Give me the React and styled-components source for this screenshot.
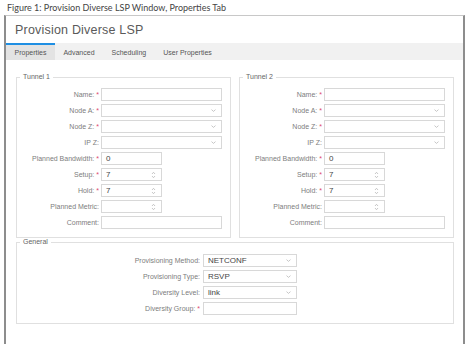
import React from 'react';
import styled, { createGlobalStyle } from 'styled-components';

const Global = createGlobalStyle`
  html, body { margin: 0; padding: 0; background: #fff; overflow: hidden; }
  body { width: 474px; height: 344px; }
`;

const Page = styled.div`
  padding-left: 4px;
  font-family: "Liberation Sans", Arial, sans-serif;
`;

const Caption = styled.div`
  font-family: Lato, "Liberation Sans", sans-serif;
  font-size: 9px;
  line-height: 15px;
  height: 15px;
  color: #444;
  padding-left: 3px;
  white-space: nowrap;
`;

const Window = styled.div`
  width: 461px;
  height: 340px;
  box-sizing: border-box;
  border: 2px solid #8d8d8d;
  border-top: 1px solid #c8c8c8;
  background: #fff;
`;

const Title = styled.div`
  height: 27px;
  display: flex;
  align-items: center;
  padding-left: 9px;
  font-size: 12.5px;
  letter-spacing: 0.2px;
  color: #5a5a5a;
`;

const TabBar = styled.div`
  height: 17px;
  display: flex;
  background: #f1f1f1;
`;

const Tab = styled.div`
  box-sizing: border-box;
  height: 17px;
  padding: 0 8.5px;
  display: flex;
  align-items: center;
  font-size: 7px;
  color: #555;
  border-top: 2px solid ${p => (p.$active ? '#1f8fe3' : 'transparent')};
  background: ${p => (p.$active ? '#e3e3e3' : 'transparent')};
`;

const Content = styled.div`
  padding: 13px 9px 0 10px;
`;

const TunnelRow = styled.div`
  display: flex;
  gap: 8px;
`;

const Group = styled.fieldset`
  flex: 1;
  margin: 0;
  padding: 7px 0 8px 0;
  border: 1px solid #e0e0e0;
  min-width: 0;
`;

const GeneralGroup = styled(Group)`
  margin-top: 0;
  padding-top: 8px;
`;

const Legend = styled.legend`
  margin-left: 3px;
  padding: 0 3px;
  font-size: 7px;
  line-height: 8px;
  color: #666;
`;

const Form = styled.div`
  display: grid;
  grid-template-columns: ${p => p.$label}px auto;
  column-gap: ${p => p.$gap}px;
  row-gap: 3px;
  justify-content: start;
`;

const Label = styled.div`
  height: 13px;
  display: flex;
  align-items: center;
  justify-content: flex-end;
  font-size: 7px;
  color: #7d7d7d;
  white-space: nowrap;
`;

const Req = styled.span`
  color: #dc4a70;
  margin-left: 2px;
`;

const Input = styled.div`
  box-sizing: border-box;
  width: ${p => p.$w}px;
  height: 13px;
  border: 1px solid #d8d8d8;
  background: #fff;
  display: flex;
  align-items: center;
  justify-content: space-between;
  padding: 0 5px 0 4px;
  font-size: 8px;
  color: #444;
`;

const Chevron = () => (
  <svg width="5" height="3" viewBox="0 0 5 3">
    <polyline points="0.5,0.6 2.5,2.4 4.5,0.6" fill="none" stroke="#b0b0b0" strokeWidth="0.7" />
  </svg>
);

const Spinner = () => (
  <svg width="5" height="8" viewBox="0 0 5 8">
    <polyline points="1,3 2.5,1.3 4,3" fill="none" stroke="#b0b0b0" strokeWidth="0.7" />
    <polyline points="1,5 2.5,6.7 4,5" fill="none" stroke="#b0b0b0" strokeWidth="0.7" />
  </svg>
);

const tunnelFields = [
  { label: 'Name:', req: true, kind: 'text', w: 121 },
  { label: 'Node A:', req: true, kind: 'select', w: 121 },
  { label: 'Node Z:', req: true, kind: 'select', w: 121 },
  { label: 'IP Z:', req: false, kind: 'select', w: 121 },
  { label: 'Planned Bandwidth:', req: true, kind: 'text', w: 61, value: '0' },
  { label: 'Setup:', req: true, kind: 'spin', w: 61, value: '7' },
  { label: 'Hold:', req: true, kind: 'spin', w: 61, value: '7' },
  { label: 'Planned Metric:', req: false, kind: 'spin', w: 61 },
  { label: 'Comment:', req: false, kind: 'text', w: 121 },
];

const generalFields = [
  { label: 'Provisioning Method:', kind: 'select', w: 94, value: 'NETCONF' },
  { label: 'Provisioning Type:', kind: 'select', w: 94, value: 'RSVP' },
  { label: 'Diversity Level:', kind: 'select', w: 94, value: 'link' },
  { label: 'Diversity Group:', req: true, kind: 'text', w: 94 },
];

const Field = ({ f }) => (
  <>
    <Label>
      {f.label}
      {f.req && <Req>*</Req>}
    </Label>
    <Input $w={f.w}>
      <span>{f.value || ''}</span>
      {f.kind === 'select' && <Chevron />}
      {f.kind === 'spin' && <Spinner />}
    </Input>
  </>
);

const Tunnel = ({ name }) => (
  <Group>
    <Legend>{name}</Legend>
    <Form $label={82} $gap={2}>
      {tunnelFields.map(f => <Field key={f.label} f={f} />)}
    </Form>
  </Group>
);

export default function App() {
  return (
    <Page>
      <Global />
      <Caption>Figure 1: Provision Diverse LSP Window, Properties Tab</Caption>
      <Window>
        <Title>Provision Diverse LSP</Title>
        <TabBar>
          <Tab $active>Properties</Tab>
          <Tab>Advanced</Tab>
          <Tab>Scheduling</Tab>
          <Tab>User Properties</Tab>
        </TabBar>
        <Content>
          <TunnelRow>
            <Tunnel name="Tunnel 1" />
            <Tunnel name="Tunnel 2" />
          </TunnelRow>
          <GeneralGroup>
            <Legend>General</Legend>
            <Form $label={183} $gap={3}>
              {generalFields.map(f => <Field key={f.label} f={f} />)}
            </Form>
          </GeneralGroup>
        </Content>
      </Window>
    </Page>
  );
}
